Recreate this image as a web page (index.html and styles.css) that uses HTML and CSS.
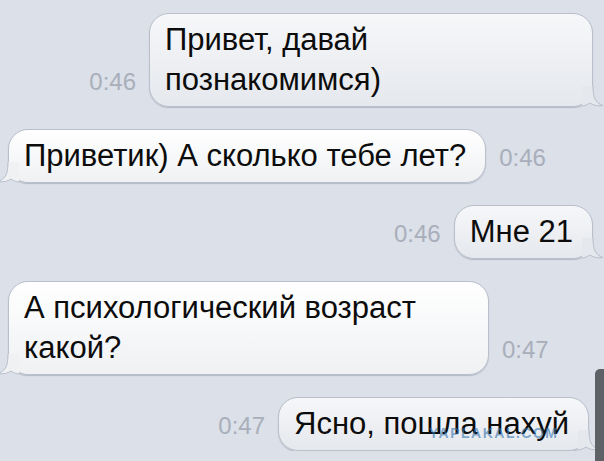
FILE: index.html
```html
<!DOCTYPE html>
<html lang="ru">
<head>
<meta charset="UTF-8">
<meta name="viewport" content="width=device-width, initial-scale=1.0">
<title>Сообщения</title>
<link rel="stylesheet" href="styles.css">
</head>
<body>

<div class="chat">
  <!-- outgoing -->
  <div class="row row-out">
    <span class="time">0:46</span>
    <div class="bubble bubble-out greeting">Привет, давай<br>познакомимся)
      <svg class="tail" viewBox="0 0 22 22"><path class="tail-fill" d="M0,1 L11,1 C11,12 13,18 21,20.5 C15,21.5 11,20 8,18 C5,20 2,21 0,21 Z"/><path class="tail-line" d="M11,1 C11,12 13,18 21,20.5 C15,21.5 11,20 8,18 C5,20 2,21 0,21"/></svg>
    </div>
  </div>

  <!-- incoming -->
  <div class="row row-in">
    <div class="bubble bubble-in">Приветик) А сколько тебе лет?
      <svg class="tail" viewBox="0 0 22 22"><path class="tail-fill" d="M0,1 L11,1 C11,12 13,18 21,20.5 C15,21.5 11,20 8,18 C5,20 2,21 0,21 Z"/><path class="tail-line" d="M11,1 C11,12 13,18 21,20.5 C15,21.5 11,20 8,18 C5,20 2,21 0,21"/></svg>
    </div>
    <span class="time">0:46</span>
  </div>

  <div class="row row-out">
    <span class="time">0:46</span>
    <div class="bubble bubble-out">Мне 21
      <svg class="tail" viewBox="0 0 22 22"><path class="tail-fill" d="M0,1 L11,1 C11,12 13,18 21,20.5 C15,21.5 11,20 8,18 C5,20 2,21 0,21 Z"/><path class="tail-line" d="M11,1 C11,12 13,18 21,20.5 C15,21.5 11,20 8,18 C5,20 2,21 0,21"/></svg>
    </div>
  </div>

  <div class="row row-in">
    <div class="bubble bubble-in question">А психологический возраст<br>какой?
      <svg class="tail" viewBox="0 0 22 22"><path class="tail-fill" d="M0,1 L11,1 C11,12 13,18 21,20.5 C15,21.5 11,20 8,18 C5,20 2,21 0,21 Z"/><path class="tail-line" d="M11,1 C11,12 13,18 21,20.5 C15,21.5 11,20 8,18 C5,20 2,21 0,21"/></svg>
    </div>
    <span class="time">0:47</span>
  </div>

  <div class="row row-out">
    <span class="time">0:47</span>
    <div class="bubble bubble-out last">Ясно, пошла нахуй
      <svg class="tail" viewBox="0 0 22 22"><path class="tail-fill" d="M0,1 L11,1 C11,12 13,18 21,20.5 C15,21.5 11,20 8,18 C5,20 2,21 0,21 Z"/><path class="tail-line" d="M11,1 C11,12 13,18 21,20.5 C15,21.5 11,20 8,18 C5,20 2,21 0,21"/></svg>
      <span class="watermark">YAPLAKAL.COM</span>
    </div>
  </div>
</div>

<div class="scrollbar"></div>

</body>
</html>
```
FILE: styles.css
```css
body {
  margin: 0;
  padding: 0;
  background-color: #dbe0e9;
  font-family: "Liberation Sans", Arial, sans-serif;
  overflow: hidden;
}

.chat {
  display: flex;
  flex-direction: column;
  gap: 22px;
  padding: 13px 11px 0 8px;
}

.row {
  display: flex;
  align-items: last baseline;
  gap: 13px;
}
.row-out {
  justify-content: flex-end;
}

/* timestamps next to bubbles */
.time {
  font-size: 24px;
  color: #a9afba;
  font-weight: normal;
}

.bubble {
  position: relative;
  box-sizing: border-box;
  font-size: 31px;
  line-height: 40px;
  color: #0c0c0c;
  padding: 6px 19px 6px 15px;
  border-radius: 20px;
  border: 1px solid #b9c0cb;
  box-shadow: 0 1px 1px rgba(60, 70, 90, 0.25);
}
.bubble-out {
  background: linear-gradient(#f6f7f9, #e5e8ed);
}
.bubble-in {
  background: linear-gradient(#ffffff, #eff1f3);
}

.greeting {
  width: 444px;
}
.question {
  width: 481px;
}
.last {
  margin-right: 4px;
}

/* little tail at the bottom corner */
.tail {
  position: absolute;
  width: 22px;
  height: 22px;
  bottom: -1px;
  right: -12px;
  overflow: visible;
}
.bubble-out .tail {
  color: #e5e8ed;
}
.bubble-in .tail {
  right: auto;
  left: -12px;
  transform: scaleX(-1);
  color: #eff1f3;
}
.tail-fill {
  fill: currentColor;
}
.tail-line {
  fill: none;
  stroke: #b9c0cb;
  stroke-width: 1;
}

.watermark {
  position: absolute;
  left: 150px;
  top: 28px;
  font-size: 14px;
  line-height: 14px;
  font-weight: bold;
  letter-spacing: 1.5px;
  color: rgba(50, 115, 175, 0.6);
}

.scrollbar {
  position: fixed;
  right: 0;
  top: 369px;
  width: 9px;
  height: 100px;
  border-radius: 5px 0 0 0;
  background-color: #5e6166;
}
```
